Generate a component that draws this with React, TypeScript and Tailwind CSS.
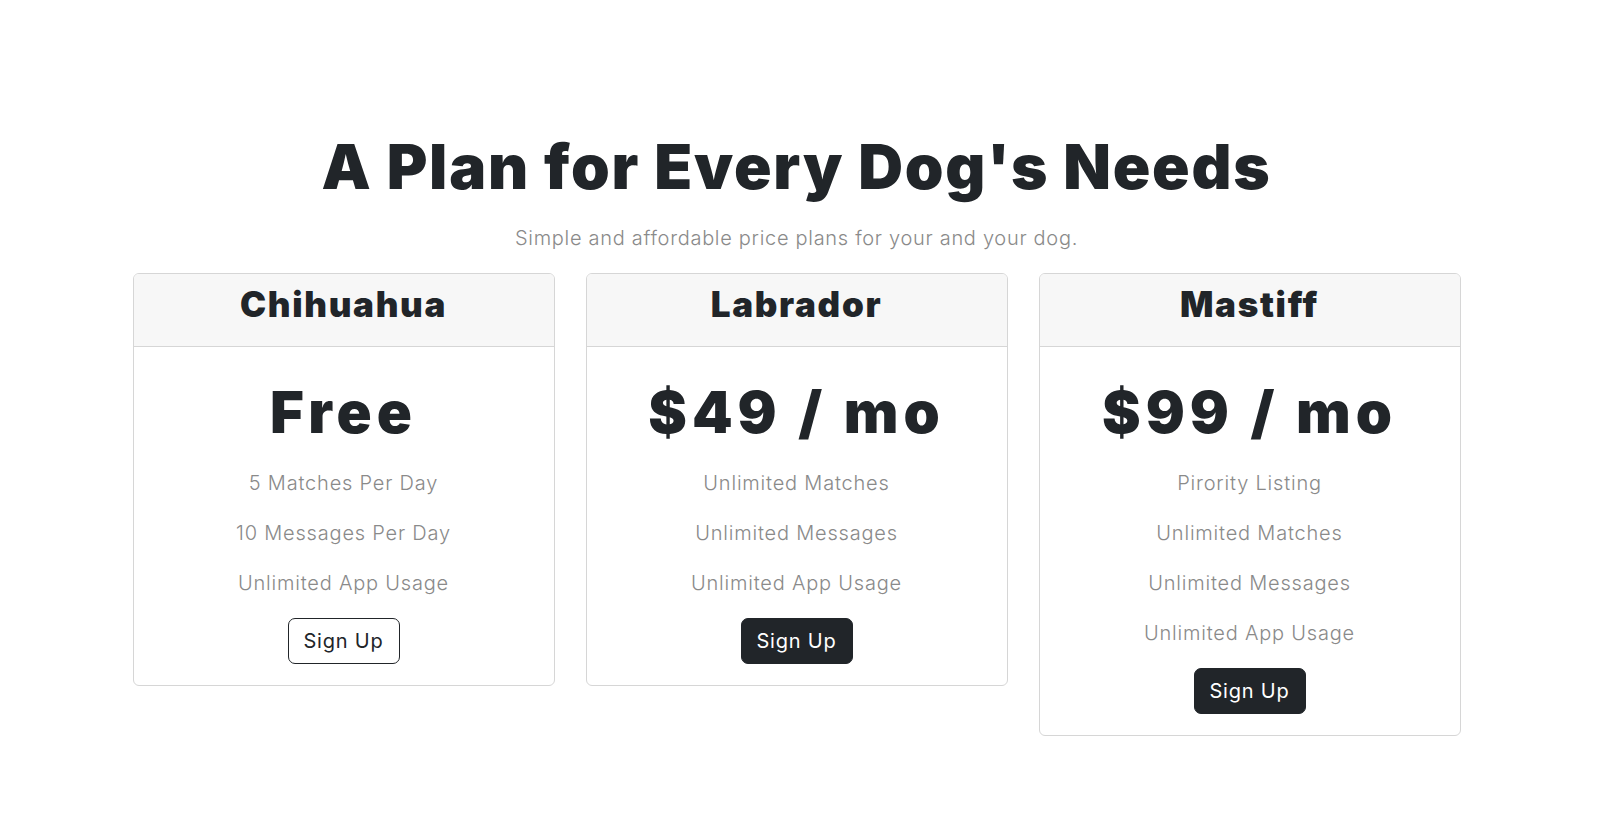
import React from "react";

type Plan = {
  name: string;
  price: string;
  features: string[];
  outline: boolean;
};

const plans: Plan[] = [
  {
    name: "Chihuahua",
    price: "Free",
    features: ["5 Matches Per Day", "10 Messages Per Day", "Unlimited App Usage"],
    outline: true,
  },
  {
    name: "Labrador",
    price: "$49 / mo",
    features: ["Unlimited Matches", "Unlimited Messages", "Unlimited App Usage"],
    outline: false,
  },
  {
    name: "Mastiff",
    price: "$99 / mo",
    features: ["Pirority Listing", "Unlimited Matches", "Unlimited Messages", "Unlimited App Usage"],
    outline: false,
  },
];

function Card({ plan }: { plan: Plan }) {
  return (
    <div className="w-[422px] border border-[#d6d6d6] rounded-[6px] bg-white overflow-hidden">
      <div className="bg-[#f7f7f7] border-b border-[#d6d6d6] h-[73px] pt-[8px] text-center">
        <h3 className="text-[35px] leading-[44px] font-black tracking-[1.7px] text-[#212529]">{plan.name}</h3>
      </div>
      <div className="pt-[32px] pb-[21px] px-4 flex flex-col items-center text-center">
        <h1 className="text-[58px] leading-[67px] font-black tracking-[5px] text-[#212529] mb-[22px]">{plan.price}</h1>
        <ul className="flex flex-col items-center">
          {plan.features.map((f) => (
            <li key={f} className="text-[20px] leading-[30px] mb-[20px] tracking-[0.8px] text-[#8a8a8a] font-light">
              {f}
            </li>
          ))}
        </ul>
        {plan.outline ? (
          <button className="w-[112px] h-[46px] border border-[#212529] rounded-[7px] text-[20px] tracking-[0.8px] text-[#212529] bg-white">
            Sign Up
          </button>
        ) : (
          <button className="w-[112px] h-[46px] border border-[#212529] rounded-[7px] text-[20px] tracking-[0.8px] text-white bg-[#212529]">
            Sign Up
          </button>
        )}
      </div>
    </div>
  );
}

export default function App() {
  return (
    <div
      className="w-full min-h-[822px] bg-white pr-[15px]"
      style={{ fontFamily: "Inter, 'Noto Sans', sans-serif" }}
    >
      <div className="pt-[129px] flex flex-col items-center">
        <h1 className="text-[62px] leading-[76px] font-black tracking-[1.75px] text-[#212529] text-center">
          A Plan for Every Dog's Needs
        </h1>
        <p className="mt-[18px] text-[20px] leading-[30px] font-light tracking-[0.7px] text-[#8a8a8a] text-center">
          Simple and affordable price plans for your and your dog.
        </p>
        <div className="mt-[20px] flex items-start justify-center gap-[31px]">
          {plans.map((p) => (
            <Card key={p.name} plan={p} />
          ))}
        </div>
      </div>
    </div>
  );
}
